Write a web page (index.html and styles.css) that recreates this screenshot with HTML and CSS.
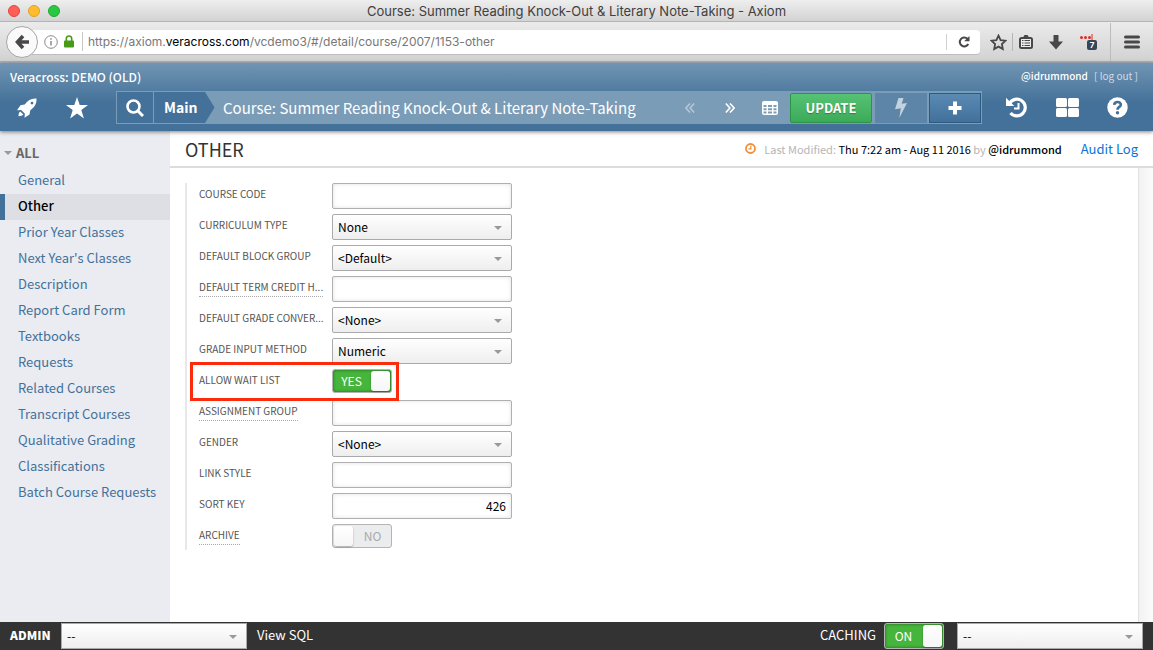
FILE: index.html
```html
<!DOCTYPE html>
<html lang="en">
<head>
    <meta charset="UTF-8">
    <meta name="viewport" content="width=device-width, initial-scale=1.0">
    <title>Course: Summer Reading Knock-Out &amp; Literary Note-Taking - Axiom</title>
    <link rel="stylesheet" href="styles.css">
</head>
<body>
    <!-- browser window -->
    <div class="titlebar">
        <div class="lights">
            <span class="light red"></span>
            <span class="light yellow"></span>
            <span class="light green"></span>
        </div>
        <div class="window-title">Course: Summer Reading Knock-Out &amp; Literary Note-Taking - Axiom</div>
    </div>
    <div class="browser-bar">
        <button class="back" aria-label="Back">
            <svg width="14" height="16" viewBox="0 0 14 16" fill="none" stroke="#484848" stroke-width="3.600"><path d="M8 2L2.500 8L8 14M3 8H14"/></svg>
        </button>
        <div class="url-bar">
            <svg width="14" height="14" viewBox="0 0 14 14" fill="none" stroke="#8a8a8a"><circle cx="7" cy="7" r="6.3"/><path d="M7 6v4.500M7 3.300v1.500" stroke-width="1.500"/></svg>
            <svg width="10" height="13" viewBox="0 0 10 13"><path d="M2.300 6V3.700a2.700 2.700 0 0 1 5.400 0V6" fill="none" stroke="#479b16" stroke-width="1.600"/><rect y="5.500" width="10" height="7" rx="1" fill="#479b16"/></svg>
            <div class="url">https://axiom.<b>veracross.com</b>/vcdemo3/#/detail/course/2007/1153-other</div>
            <button class="reload" aria-label="Reload">
                <svg width="12" height="12" viewBox="0 0 12 12"><path d="M9.500 2.700A4.500 4.500 0 1 0 10.300 8" fill="none" stroke="#484848" stroke-width="2"/><path d="M11.500 0v5.300H6.200z" fill="#484848"/></svg>
            </button>
        </div>
        <div class="browser-icons">
            <svg width="17" height="17" viewBox="0 0 17 17"><path d="M8.500 1.600l2.100 4.500 4.900.6-3.600 3.400.9 4.900-4.300-2.400L4.200 15l.9-4.900L1.500 6.700l4.900-.6z" fill="none" stroke="#484848" stroke-width="1.800"/></svg>
            <span class="separator"></span>
            <svg width="14" height="16" viewBox="0 0 14 16"><path d="M4 3.500L5.500 1h3L10 3.500" fill="#484848"/><rect x="1" y="4" width="12" height="10" rx="1.500" fill="#eee" stroke="#484848" stroke-width="2"/><path d="M3 6.500h1.500M5.500 6.500H11M3 9h1.500M5.500 9H11M3 11.500h1.500M5.500 11.500H11" stroke="#484848" stroke-width="1"/></svg>
            <svg width="14" height="15" viewBox="0 0 14 15"><path d="M4.500 0h5v6.500H14L7 14.500 0 6.500h4.500z" fill="#484848"/></svg>
            <div class="extension">
                <svg width="13" height="7" viewBox="0 0 13 7" fill="#e8281c"><circle cx="1.500" cy="3.500" r="1.500"/><circle cx="5.500" cy="3.500" r="1.500"/><circle cx="9.500" cy="3.500" r="1.500"/><path d="M11.500 0h1v6h-1z"/></svg>
                <span class="badge">7</span>
            </div>
            <svg class="menu-icon" width="16" height="14" viewBox="0 0 16 14"><path d="M1.500 2h13M1.500 7h13M1.500 12h13" stroke="#484848" stroke-width="3" stroke-linecap="round"/></svg>
        </div>
    </div>

    <!-- application header -->
    <header class="header">
        <div class="account">
            <span class="school">Veracross: DEMO (OLD)</span>
            <span class="user"><strong>@idrummond</strong> <a href="#">[ log out ]</a></span>
        </div>
        <nav class="nav">
            <a href="#" class="nav-icon" aria-label="Launch">
                <svg width="20" height="20" viewBox="0 0 20 20" fill="#fff"><path fill-rule="evenodd" d="M19.500.500C14.500 0 11 2 7.700 6.500L3.500 7.300 0 12.300l4.200-.4 3.700 3.800-.4 4.100 5-3.400.8-4.200C17.800 9 19.800 5.500 19.500.500zM15 3.700a1.400 1.400 0 1 1 0 2.800 1.400 1.400 0 0 1 0-2.800z"/><path d="M3.200 13.500c-1.300.8-1.700 2.500-1.700 4.800 2.300 0 4-.4 4.800-1.700z"/></svg>
            </a>
            <a href="#" class="nav-icon" aria-label="Favorites">
                <svg width="22" height="22" viewBox="0 0 22 22" fill="#fff"><path d="M11 0l2.700 8H22l-6.700 5 2.600 8.500L11 16.400l-6.900 5.100L6.700 13 0 8h8.300z"/></svg>
            </a>
            <div class="crumbs">
                <button class="crumb-search" aria-label="Search">
                    <svg width="18" height="18" viewBox="0 0 18 18" fill="none" stroke="#fff" stroke-width="2.600"><circle cx="7.500" cy="7.500" r="6"/><path d="M12 12l5 5" stroke-width="3"/></svg>
                </button>
                <a href="#" class="crumb-main">Main</a>
                <svg class="crumb-arrow" width="10" height="31" viewBox="0 0 10 31"><path d="M0 0l9.500 15.500L0 31z" fill="#447199"/></svg>
                <span class="crumb-title">Course: Summer Reading Knock-Out &amp; Literary Note-Taking</span>
                <button class="tool faded" aria-label="Previous">
                    <svg width="10" height="10" viewBox="0 0 10 10" fill="none" stroke="#fff" stroke-width="1.500"><path d="M5 .500L.900 5 5 9.500M9.200.500L5.100 5l4.100 4.500"/></svg>
                </button>
                <button class="tool" aria-label="Next">
                    <svg width="10" height="10" viewBox="0 0 10 10" fill="none" stroke="#fff" stroke-width="1.600"><path d="M.800.500L4.900 5 .800 9.500M5 .500L9.100 5 5 9.500"/></svg>
                </button>
                <button class="tool" aria-label="Grid view">
                    <svg width="16" height="14" viewBox="0 0 16 14"><rect width="16" height="14" rx="2" fill="#fff"/><path d="M1.500 4h3v2h-3zM6 4h4v2H6zM11.500 4h3v2h-3zM1.500 7.200h3v2h-3zM6 7.200h4v2H6zM11.500 7.200h3v2h-3zM1.500 10.500h3v2h-3zM6 10.500h4v2H6zM11.500 10.500h3v2h-3z" fill="#7b9cb7"/></svg>
                </button>
                <button class="update">UPDATE</button>
                <button class="square bolt" aria-label="Actions">
                    <svg width="12" height="20" viewBox="0 0 12 20" fill="#c3d2df"><path d="M3.500 0h5L6.700 5.700 12 4.900 4.300 20l1.500-9.700L0 11.300z"/></svg>
                </button>
                <button class="square plus" aria-label="Add">
                    <svg width="14" height="14" viewBox="0 0 14 14" stroke="#fff" stroke-width="4"><path d="M7 .500v13M.500 7h13"/></svg>
                </button>
            </div>
            <a href="#" class="nav-icon" aria-label="History">
                <svg width="22" height="21" viewBox="0 0 22 21" fill="none" stroke="#fff"><path d="M3.500 6.500A8.400 8.400 0 1 1 4.500 16" stroke-width="3.200"/><path d="M0 .800V9h8.300z" fill="#fff" stroke="none"/><path d="M12.500 6v5.500H8" stroke-width="2"/></svg>
            </a>
            <a href="#" class="nav-icon" aria-label="Apps">
                <svg width="23" height="19" viewBox="0 0 23 19" fill="#fff"><rect width="11" height="9" rx="1.500"/><rect x="12" width="11" height="9" rx="1.500"/><rect y="10" width="11" height="9" rx="1.500"/><rect x="12" y="10" width="11" height="9" rx="1.500"/></svg>
            </a>
            <a href="#" class="nav-icon" aria-label="Help">
                <svg width="21" height="21" viewBox="0 0 21 21"><circle cx="10.500" cy="10.500" r="10.200" fill="#fff"/><path d="M7.200 7.800C7.500 4 14 4.200 13.800 7.700c0 2.300-3.300 2.200-3.300 5" fill="none" stroke="#447199" stroke-width="2.700"/><circle cx="10.500" cy="15.800" r="1.700" fill="#447199"/></svg>
            </a>
        </nav>
    </header>

    <div class="main">
        <aside class="sidebar">
            <div class="side-title">ALL</div>
            <ul>
                <li><a href="#">General</a></li>
                <li class="active"><a href="#">Other</a></li>
                <li><a href="#">Prior Year Classes</a></li>
                <li><a href="#">Next Year's Classes</a></li>
                <li><a href="#">Description</a></li>
                <li><a href="#">Report Card Form</a></li>
                <li><a href="#">Textbooks</a></li>
                <li><a href="#">Requests</a></li>
                <li><a href="#">Related Courses</a></li>
                <li><a href="#">Transcript Courses</a></li>
                <li><a href="#">Qualitative Grading</a></li>
                <li><a href="#">Classifications</a></li>
                <li><a href="#">Batch Course Requests</a></li>
            </ul>
        </aside>

        <section class="content">
            <div class="content-head">
                <h1>OTHER</h1>
                <div class="modified">
                    <svg width="11" height="11" viewBox="0 0 11 11" fill="none" stroke="#f28f3b"><circle cx="5.500" cy="5.500" r="4.500" stroke-width="1.800"/><path d="M5.800 2.800v3H3.500" stroke-width="1.200"/></svg>
                    <span>Last Modified: <em>Thu 7:22 am - Aug 11 2016</em> by <strong>@idrummond</strong></span>
                </div>
                <a href="#" class="audit">Audit Log</a>
            </div>
            <div class="content-body">
                <form class="fields">
                    <div class="row">
                        <label for="code">COURSE CODE</label>
                        <input type="text" id="code">
                    </div>
                    <div class="row">
                        <label for="curriculum">CURRICULUM TYPE</label>
                        <div class="select"><select id="curriculum"><option>None</option></select></div>
                    </div>
                    <div class="row">
                        <label for="block">DEFAULT BLOCK GROUP</label>
                        <div class="select"><select id="block"><option>&lt;Default&gt;</option></select></div>
                    </div>
                    <div class="row">
                        <label for="credit" class="hint">DEFAULT TERM CREDIT H...</label>
                        <input type="text" id="credit">
                    </div>
                    <div class="row">
                        <label for="conversion">DEFAULT GRADE CONVER...</label>
                        <div class="select"><select id="conversion"><option>&lt;None&gt;</option></select></div>
                    </div>
                    <div class="row">
                        <label for="method">GRADE INPUT METHOD</label>
                        <div class="select"><select id="method"><option>Numeric</option></select></div>
                    </div>
                    <div class="row marked">
                        <label for="waitlist">ALLOW WAIT LIST</label>
                        <div class="switch on"><span>YES</span><input type="checkbox" id="waitlist" checked></div>
                    </div>
                    <div class="row">
                        <label for="group" class="hint">ASSIGNMENT GROUP</label>
                        <input type="text" id="group">
                    </div>
                    <div class="row">
                        <label for="gender">GENDER</label>
                        <div class="select"><select id="gender"><option>&lt;None&gt;</option></select></div>
                    </div>
                    <div class="row">
                        <label for="link">LINK STYLE</label>
                        <input type="text" id="link">
                    </div>
                    <div class="row">
                        <label for="sort">SORT KEY</label>
                        <input type="text" id="sort" class="number" value="426">
                    </div>
                    <div class="row">
                        <label for="archive" class="hint">ARCHIVE</label>
                        <div class="switch"><input type="checkbox" id="archive"><span>NO</span></div>
                    </div>
                </form>
                <div class="gutter"></div>
            </div>
        </section>
    </div>

    <footer class="footer">
        <label for="admin" class="admin">ADMIN</label>
        <div class="select"><select id="admin"><option>--</option></select></div>
        <a href="#" class="sql">View SQL</a>
        <label for="caching" class="caching">CACHING</label>
        <div class="switch on"><span>ON</span><input type="checkbox" id="caching" checked></div>
        <div class="select last"><select aria-label="Cache options"><option>--</option></select></div>
    </footer>
</body>
</html>
```
FILE: styles.css
```css
:root {
    --blue: #447199;
    --app-font: 'Noto Sans CJK SC', 'Open Sans', sans-serif;
    --browser-font: Inter, 'Liberation Sans', sans-serif;
}
*, *::before {
    box-sizing: border-box;
}
body {
    margin: 0;
    min-height: 100vh;
    display: flex;
    flex-direction: column;
    font-family: var(--app-font);
    font-size: 13px;
    line-height: 20px;
    color: #000;
    background: #fff;
}
button, input, select {
    font-family: inherit;
    font-size: 12px;
    margin: 0;
}
button {
    padding: 0;
    border: none;
    background: none;
    cursor: pointer;
}
a {
    text-decoration: none;
}
svg {
    display: block;
    flex: none;
}

/* browser window */
.titlebar {
    display: flex;
    align-items: center;
    height: 22px;
    padding: 0 8px;
    background: linear-gradient(#eeeeee, #d3d3d3);
    border-bottom: 1px solid #b4b4b4;
    font-family: var(--browser-font);
}
.lights {
    display: flex;
    flex: 1;
    gap: 8px;
}
.titlebar::after {
    content: "";
    flex: 1;
}
.light {
    width: 12px;
    height: 12px;
    border-radius: 50%;
    border: 1px solid #e2463f;
    background: #ff5f57;
}
.yellow {
    border-color: #e0a02c;
    background: #ffbd2e;
}
.green {
    border-color: #1fa931;
    background: #28c941;
}
.window-title {
    padding-top: 1px;
    color: #404040;
    white-space: nowrap;
}
.browser-bar {
    display: flex;
    align-items: center;
    height: 41px;
    padding: 1px 0 0 6px;
    background: linear-gradient(#ebebeb, #d2d2d2);
    border-bottom: 2px solid #aab4be;
    font-family: var(--browser-font);
}
.back {
    display: flex;
    justify-content: center;
    align-items: center;
    width: 32px;
    height: 32px;
    border: 1px solid #a5a5a5;
    border-radius: 50%;
    background: #fafafa;
    z-index: 1;
}
.url-bar {
    flex: 1;
    display: flex;
    align-items: center;
    gap: 6px;
    height: 25px;
    margin-left: -6px;
    padding-left: 12px;
    background: #fff;
    border-bottom: 1px solid #bdbdbd;
    border-radius: 0 4px 4px 0;
}
.url {
    flex: 1;
    margin-left: 2px;
    padding: 1px 0 0 5px;
    border-left: 1px solid #c8c8c8;
    font-size: 12px;
    line-height: 18px;
    color: #777;
}
.url b {
    font-weight: normal;
    color: #000;
}
.reload {
    display: flex;
    justify-content: center;
    align-items: center;
    width: 34px;
    height: 16px;
    border-left: 1px solid #d0d0d0;
}
.browser-icons {
    display: flex;
    align-items: center;
    padding-left: 10px;
}
.separator {
    width: 1px;
    height: 18px;
    margin: 0 6px 0 5px;
    background: #b5b5b5;
}
.browser-icons svg + svg {
    margin-left: 16px;
}
.extension {
    position: relative;
    width: 17px;
    height: 16px;
    margin: 0 13px 0 17px;
}
.badge {
    position: absolute;
    right: 0;
    bottom: 0;
    width: 10px;
    height: 10px;
    border-radius: 2px;
    background: #35475a;
    color: #fff;
    font-size: 8px;
    font-weight: bold;
    line-height: 10px;
    text-align: center;
}
.menu-icon {
    box-sizing: content-box;
    height: 14px;
    padding: 12px 13px;
    border-left: 1px solid #bcbcbc;
}

/* application header */
.header {
    position: relative;
    height: 68px;
    background: linear-gradient(#7095b3, var(--blue) 40px);
    box-shadow: 0 1px 4px rgba(0,0,0,0.5);
    color: #fff;
}
.account {
    display: flex;
    justify-content: space-between;
    align-items: center;
    height: 28px;
    padding: 0 15px 0 10px;
    font-size: 12px;
}
.school {
    font-weight: 500;
}
.user {
    padding-bottom: 2px;
    font-size: 10px;
}
.user strong {
    font-weight: 500;
}
.user a {
    margin-left: 4px;
    color: #cfdce7;
}
.nav {
    display: flex;
    align-items: center;
}
.nav-icon {
    display: flex;
    justify-content: center;
    width: 50px;
}
.nav-icon:first-child {
    margin-left: 2px;
}
.nav-icon:last-child {
    margin-right: 11px;
}
.crumbs {
    flex: 1;
    display: flex;
    align-items: center;
    height: 33px;
    margin: 0 10px 0 14px;
    border: 1px solid #7b9cb7;
    background: #7b9cb7;
}
.crumb-search {
    display: flex;
    justify-content: center;
    align-items: center;
    width: 37px;
    height: 31px;
    border-right: 1px solid #7b9cb7;
    background: var(--blue);
}
.crumb-main {
    width: 51px;
    padding-left: 10px;
    background: var(--blue);
    color: #fff;
    font-size: 14px;
    font-weight: bold;
    line-height: 31px;
}
.crumb-title {
    flex: 1;
    padding-left: 8px;
    font-size: 15px;
    white-space: nowrap;
}
.tool {
    display: flex;
    justify-content: center;
    width: 40px;
}
.faded {
    opacity: 0.45;
}
.update {
    width: 82px;
    height: 30px;
    margin-right: 3px;
    border: 1px solid #2f924a;
    border-radius: 2px;
    background: linear-gradient(#56c274, #3cab58);
    color: #fff;
    font-size: 13px;
    font-weight: bold;
    text-shadow: 0 1px 1px rgba(0,0,0,0.3);
}
.square {
    display: flex;
    justify-content: center;
    align-items: center;
    width: 52px;
    height: 30px;
}
.bolt {
    margin-right: 2px;
    background: #5c85a8;
}
.plus {
    border: 1px solid #2f5a80;
    background: linear-gradient(#5a8bb5, #42709a);
}

/* sidebar */
.main {
    flex: 1;
    display: flex;
}
.sidebar {
    width: 170px;
    padding-top: 9px;
    background: #eaecf2;
}
.side-title {
    display: flex;
    align-items: center;
    gap: 4px;
    height: 26px;
    padding-left: 4px;
    color: #666;
    font-weight: bold;
}
.side-title::before {
    content: "";
    border: 4px solid transparent;
    border-top-color: #999;
    border-bottom: none;
}
.sidebar ul {
    list-style: none;
    margin: 2px 0 0;
    padding: 0;
}
.sidebar a {
    display: block;
    padding: 0 0 2px 18px;
    color: var(--blue);
    line-height: 24px;
}
.sidebar .active a {
    padding-left: 13px;
    border-left: 5px solid var(--blue);
    background: #dedfe4;
    color: #000;
    font-weight: 500;
}

/* content */
.content {
    flex: 1;
    display: flex;
    flex-direction: column;
}
.content-head {
    display: flex;
    align-items: center;
    height: 37px;
    padding: 0 15px;
    border-bottom: 2px solid #dcdcdc;
}
h1 {
    flex: 1;
    margin: 0;
    color: #333;
    font-size: 18px;
    font-weight: normal;
}
.modified {
    display: flex;
    align-items: center;
    gap: 8px;
    color: #b5b5b5;
    font-size: 11px;
}
.modified em {
    color: #000;
    font-style: normal;
}
.modified strong {
    color: #000;
    font-weight: 500;
}
.audit {
    margin-left: 19px;
    color: #0d74d6;
}
.content-body {
    flex: 1;
    display: flex;
    justify-content: space-between;
}
.gutter {
    width: 15px;
    background: linear-gradient(90deg, #f2f2f2, #fbfbfb);
    border-left: 1px solid #e2e2e2;
}
.fields {
    align-self: flex-start;
    margin: 15px;
    padding-left: 12px;
    border-left: 2px solid #e8e8e8;
}
.row {
    position: relative;
    display: flex;
    align-items: flex-start;
    width: 313px;
    height: 31px;
}
.row:last-child {
    height: 26px;
}
.row label {
    flex: none;
    margin-right: auto;
    padding-top: 2px;
    white-space: nowrap;
    color: #555;
    font-size: 10px;
    line-height: 18px;
}
.row .hint {
    border-bottom: 1px dotted #aaa;
}
.row .switch {
    margin-right: 120px;
}
.row input[type=text] {
    width: 180px;
    height: 26px;
    padding: 0 5px 1px;
    border: 1px solid #b0b0b0;
    border-radius: 2px;
    box-shadow: inset 0 0 4px rgba(0,0,0,0.12);
}
.row .number {
    text-align: right;
}
.select {
    position: relative;
    width: 180px;
}
.select::after {
    content: "";
    position: absolute;
    top: 12px;
    right: 10px;
    border: 4px solid transparent;
    border-top-color: #999;
    border-bottom: none;
    pointer-events: none;
}
select {
    appearance: none;
    display: block;
    width: 100%;
    height: 26px;
    padding: 0 5px 2px;
    border: 1px solid #aaa;
    border-radius: 2px;
    background: linear-gradient(#fff, #eeeeee);
    color: #000;
}
.switch {
    display: flex;
    width: 60px;
    height: 24px;
    border: 1px solid #b4b4b4;
    border-radius: 3px;
    background: #ebecee;
    color: #aaa;
    font-size: 12px;
    line-height: 21px;
}
.switch span {
    flex: 1;
    text-align: center;
}
.switch input {
    appearance: none;
    width: 19px;
    height: 20px;
    margin: 1px;
    border-radius: 3px;
    background: linear-gradient(#fff, #f6f6f6);
    box-shadow: 0 1px 2px rgba(0,0,0,0.3);
}
.switch.on {
    background: #45b53b;
    box-shadow: inset 0 0 3px rgba(0,0,0,0.5);
    color: #fff;
}
/* red frame round the highlighted row */
.marked::before {
    content: "";
    position: absolute;
    top: -7px;
    left: -9px;
    width: 209px;
    height: 39px;
    border: 3px solid #fb2b0b;
    z-index: 1;
    pointer-events: none;
}

/* footer */
.footer {
    display: flex;
    align-items: center;
    height: 28px;
    padding: 0 10px;
    background: #333;
    color: #fff;
}
.footer > label, .sql {
    padding-bottom: 2px;
}
.footer select {
    border-radius: 0;
}
.footer .select {
    width: 186px;
}
.admin {
    width: 51px;
    font-size: 12px;
    font-weight: 900;
}
.sql {
    margin: 0 auto 0 10px;
    color: #fff;
}
.caching {
    margin-right: 8px;
}
.footer .switch {
    height: 26px;
    line-height: 23px;
}
.footer .switch input {
    height: 22px;
}
.footer .last {
    margin-left: 13px;
}
```
